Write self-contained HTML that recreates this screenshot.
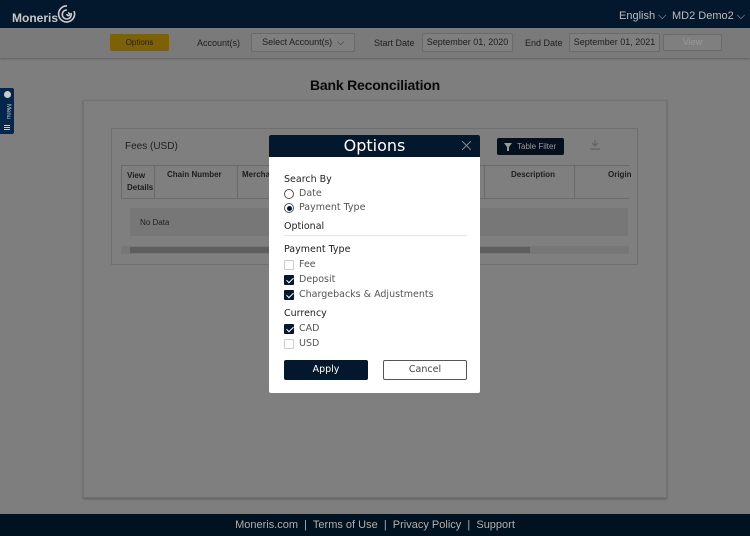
<!DOCTYPE html>
<html><head><meta charset="utf-8"><style>
*{box-sizing:border-box;margin:0;padding:0}
body{width:750px;height:536px;overflow:hidden;background:#7e7e7e;font-family:"Liberation Sans",sans-serif;position:relative;color:#1a1a1a}
.hdr{position:absolute;left:0;top:0;width:750px;height:28px;background:#03172d}
.logo{position:absolute;left:12px;top:11px;color:#c8c8c8;font-weight:bold;font-size:12px}
.hr{position:absolute;top:10px;color:#bdbdbd;font-size:11px}
.tb{position:absolute;left:0;top:28px;width:750px;height:30px;background:#7a7a7a;box-shadow:0 1px 2px rgba(0,0,0,.25)}
.abs{position:absolute}
.box{position:absolute;border:1px solid #6a6a6a;background:#7f7f7f;font-size:9px;color:#1e1e1e;text-align:center;border-radius:2px}
.lbl{position:absolute;font-size:9px;color:#1e1e1e}
.card{position:absolute;left:83px;top:100px;width:584px;height:398px;background:#7f7f7f;border:1px solid #727272;box-shadow:0 1px 2px rgba(0,0,0,.3)}
.inner{position:absolute;left:111px;top:128px;width:527px;height:137px;border:1px solid #6f6f6f;background:#7f7f7f}
.th{position:absolute;font-size:8px;font-weight:bold;color:#1e1e1e}
.foot{position:absolute;left:0;top:514px;width:750px;height:22px;background:#00111f;color:#b0b0b0;font-size:11px;text-align:center;line-height:22px}
.modal{position:absolute;left:269px;top:135px;width:211px;height:258px;background:#fff;border-radius:2px}
.mh{height:22px;background:#03172d;color:#fff;font-size:16px;text-align:center;line-height:22px;font-family:"DejaVu Sans","Liberation Sans",sans-serif;border-radius:2px 2px 0 0}
.m{position:absolute;font-size:9.5px;color:#222;font-family:"DejaVu Sans","Liberation Sans",sans-serif}
.g{color:#555}
.rad{position:absolute;width:10px;height:10px;border:1px solid #555;border-radius:50%}
.cb{position:absolute;width:10px;height:10px;border:1px solid #ccc;border-radius:1px}
.cb.on{background:#03172d;border-color:#03172d}
.cb.on:after{content:"";position:absolute;left:2.5px;top:0px;width:3px;height:6px;border:solid #fff;border-width:0 1.6px 1.6px 0;transform:rotate(45deg)}
</style></head><body>
<div class="hdr">
 <div class="logo">Moneris</div>
 <svg class="abs" style="left:57px;top:3px" width="20" height="22" viewBox="0 0 20 22"><g fill="none" stroke="#ccc" stroke-width="1.6"><path d="M10 3a8 8 0 1 0 7 5"/><path d="M10 7a4.5 4.5 0 1 0 4 3"/><path d="M10 11a1.3 1.3 0 1 0 1 -1"/></g></svg>
 <div class="hr" style="left:619px">English ⌵</div>
 <div class="hr" style="left:672px">MD2 Demo2 ⌵</div>
</div>
<div class="tb"></div>
<div class="box" style="left:110px;top:34px;width:59px;height:17px;background:#7d6107;border-color:#7d6107;line-height:15px;font-size:8px">Options</div>
<div class="lbl" style="left:197px;top:38px">Account(s)</div>
<div class="box" style="left:251px;top:33px;width:104px;height:19px;line-height:17px">Select Account(s) &nbsp;⌵</div>
<div class="lbl" style="left:374px;top:38px">Start Date</div>
<div class="box" style="left:422px;top:33px;width:91px;height:19px;line-height:17px">September 01, 2020</div>
<div class="lbl" style="left:525px;top:38px">End Date</div>
<div class="box" style="left:569px;top:33px;width:91px;height:19px;line-height:17px">September 01, 2021</div>
<div class="box" style="left:663px;top:34px;width:59px;height:17px;line-height:15px;color:#999">View</div>
<div class="abs" style="left:0;top:88px;width:14px;height:46px;background:#03264a;border-radius:0 2px 2px 0"></div>
<div class="abs" style="left:4px;top:91px;width:7px;height:7px;border-radius:50%;background:#ccc"></div>
<div class="abs" style="top:104px;font-size:6px;color:#ccc;transform:rotate(90deg);transform-origin:left top;left:11px">Menu</div>
<div class="abs" style="left:4px;top:125px;width:6px;height:5px;border-top:1px solid #ccc;border-bottom:1px solid #ccc;background:linear-gradient(#ccc,#ccc) center/100% 1px no-repeat"></div>
<div class="abs" style="left:0;top:75px;width:750px;text-align:center;font-size:14px;color:#0a0a0a;font-weight:bold;letter-spacing:-0.2px;font-family:'Liberation Sans',sans-serif;top:77px">Bank Reconciliation</div>
<div class="card"></div>
<div class="inner"></div>
<div class="abs" style="left:125px;top:141px;font-size:10px;color:#1e1e1e">Fees (USD)</div>
<div class="abs" style="left:497px;top:138px;width:67px;height:17px;background:#04101d;border-radius:2px;color:#999;font-size:8px;line-height:17px;padding-left:20px">Table Filter</div>
<svg class="abs" style="left:504px;top:143px" width="8" height="8"><path d="M0 0h8L5 4v4H3V4z" fill="#999"/></svg>
<svg class="abs" style="left:590px;top:140px" width="10" height="10"><path d="M5 0v6M2 3l3 3 3-3M0 9h10" stroke="#666" stroke-width="1.4" fill="none"/></svg>
<div class="abs" style="left:121px;top:165px;width:508px;height:34px;border-top:1px solid #6a6a6a;border-bottom:1px solid #6a6a6a;border-left:1px solid #6a6a6a"></div>
<div class="abs" style="left:154px;top:165px;width:1px;height:34px;background:#6a6a6a"></div>
<div class="abs" style="left:237px;top:165px;width:1px;height:34px;background:#6a6a6a"></div>
<div class="abs" style="left:484px;top:165px;width:1px;height:34px;background:#6a6a6a"></div>
<div class="abs" style="left:574px;top:165px;width:1px;height:34px;background:#6a6a6a"></div>
<div class="th" style="left:127px;top:170px;line-height:12px">View<br>Details</div>
<div class="th" style="left:167px;top:170px">Chain Number</div>
<div class="th" style="left:242px;top:170px">Mercha</div>
<div class="th" style="left:511px;top:170px">Description</div>
<div class="th" style="left:608px;top:170px">Origin</div>
<div class="abs" style="left:130px;top:208px;width:498px;height:28px;background:#777"></div>
<div class="abs" style="left:140px;top:218px;font-size:8px;color:#1e1e1e">No Data</div>
<div class="abs" style="left:121px;top:246px;width:508px;height:8px;background:#777"></div>
<div class="abs" style="left:130px;top:247px;width:400px;height:6px;background:#5e5e5e"></div>
<div class="foot">Moneris.com &nbsp;|&nbsp; Terms of Use &nbsp;|&nbsp; Privacy Policy &nbsp;|&nbsp; Support</div>
<div class="modal">
 <div class="mh">Options</div>
 <svg class="abs" style="left:193px;top:6px" width="9" height="9"><path d="M0 0L9 9M9 0L0 9" stroke="#888" stroke-width="1"/></svg>
 <div class="m" style="left:15px;top:39px">Search By</div>
 <div class="rad" style="left:15px;top:54px"></div><div class="m g" style="left:30px;top:53px">Date</div>
 <div class="rad" style="left:15px;top:68px"><div style="margin:1.5px;width:5px;height:5px;border-radius:50%;background:#03172d"></div></div><div class="m g" style="left:30px;top:67px">Payment Type</div>
 <div class="m" style="left:15px;top:86px">Optional</div>
 <div class="abs" style="left:15px;top:100px;width:183px;height:1px;background:#e6e6e6"></div>
 <div class="m" style="left:15px;top:109px">Payment Type</div>
 <div class="cb" style="left:15px;top:125px"></div><div class="m g" style="left:30px;top:124px">Fee</div>
 <div class="cb on" style="left:15px;top:140px"></div><div class="m g" style="left:30px;top:139px">Deposit</div>
 <div class="cb on" style="left:15px;top:155px"></div><div class="m g" style="left:30px;top:154px">Chargebacks &amp; Adjustments</div>
 <div class="m" style="left:15px;top:173px">Currency</div>
 <div class="cb on" style="left:15px;top:189px"></div><div class="m g" style="left:30px;top:188px">CAD</div>
 <div class="cb" style="left:15px;top:204px"></div><div class="m g" style="left:30px;top:203px">USD</div>
 <div class="abs" style="left:15px;top:225px;width:84px;height:20px;background:#03172d;border-radius:2px;color:#fff;font-size:9.5px;text-align:center;line-height:20px;font-family:'DejaVu Sans',sans-serif">Apply</div>
 <div class="abs" style="left:114px;top:225px;width:84px;height:20px;border:1px solid #555;border-radius:2px;color:#444;font-size:9.5px;text-align:center;line-height:18px;font-family:'DejaVu Sans',sans-serif">Cancel</div>
</div>
</body></html>
